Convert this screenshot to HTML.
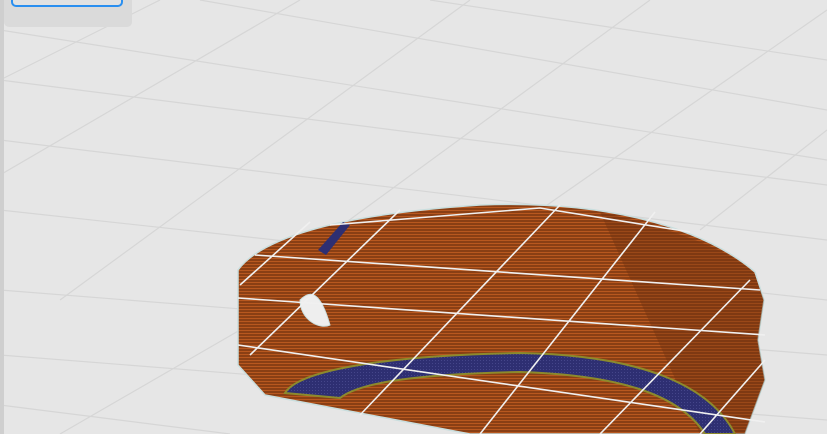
<!DOCTYPE html>
<html><head><style>
html,body{margin:0;padding:0;width:827px;height:434px;overflow:hidden;background:#e6e6e6}
</style></head><body>
<svg width="827" height="434" viewBox="0 0 827 434" xmlns="http://www.w3.org/2000/svg">
<defs>
<pattern id="lines" width="4" height="3" patternUnits="userSpaceOnUse">
<rect width="4" height="3" fill="#8a3f14"/><rect width="4" height="1" fill="#b8581f"/>
</pattern>
<pattern id="blue" width="3" height="3" patternUnits="userSpaceOnUse">
<rect width="3" height="3" fill="#2e2f72"/><rect width="1" height="1" fill="#45468a"/>
</pattern>
</defs>
<rect width="827" height="434" fill="#e6e6e6"/>
<g stroke="#d6d6d6" stroke-width="1.2" fill="none">
<path d="M0 30 L827 160"/><path d="M0 80 L827 185"/><path d="M0 140 L827 240"/><path d="M0 210 L827 300"/>
<path d="M0 290 L827 355"/><path d="M0 355 L827 420"/><path d="M200 0 L827 110"/><path d="M430 0 L827 60"/>
<path d="M160 0 L0 80"/><path d="M300 0 L0 175"/><path d="M470 0 L60 300"/><path d="M650 0 L240 300"/>
<path d="M827 10 L540 210"/><path d="M827 130 L700 230"/><path d="M0 405 L230 434"/><path d="M60 434 L240 330"/>
</g>
<rect x="0" y="0" width="4" height="434" fill="#cfcfcf"/>
<rect x="4" y="-8" width="128" height="35" rx="5" fill="#dadada"/>
<rect x="12" y="-10" width="110" height="16" rx="4" fill="#e2e2e2" stroke="#2a8ff0" stroke-width="2"/>
<path d="M238 270 C260 240 330 215 480 205 C600 200 700 225 755 272 L764 300 L758 340 L765 380 L745 434 L470 434 L265 395 L238 365 Z" fill="url(#lines)" stroke="#c9dede" stroke-width="1.5"/>
<path d="M600 212 C680 230 740 255 755 275 L764 300 L758 340 L765 380 L745 434 L700 434 Z" fill="#6e3210" opacity="0.4"/>
<path d="M285 393 C300 368 400 355 520 353 C640 355 710 385 735 434 L705 434 C680 395 620 375 520 372 C420 374 360 382 340 398 Z" fill="url(#blue)" stroke="#8c8a2c" stroke-width="2"/>
<path d="M300 300 C310 290 320 290 330 325 C320 330 300 320 300 300 Z" fill="#eeeeee" stroke="#c9dede"/>
<path d="M318 250 L343 222 L350 225 L326 255 Z" fill="#2e2f72"/>
<g stroke="#f0f0f0" stroke-width="1.6" fill="none">
<path d="M255 255 L760 290"/><path d="M238 298 L765 335"/><path d="M238 345 L765 422"/><path d="M330 225 L540 208 L690 232"/>
<path d="M310 222 L240 285"/><path d="M400 210 L250 355"/><path d="M560 205 L360 415"/><path d="M655 212 L480 434"/><path d="M750 280 L600 434"/><path d="M765 360 L700 434"/>
</g>
</svg>
</body></html>
